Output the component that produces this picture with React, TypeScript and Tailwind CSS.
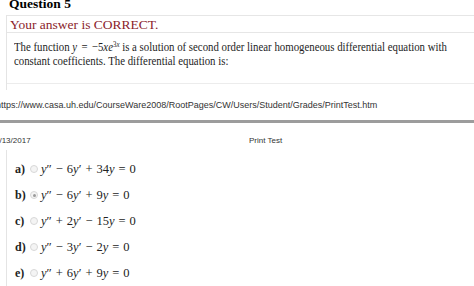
import React from 'react';

const serif = { fontFamily: '"Liberation Serif", "Times New Roman", serif' };
const sans = { fontFamily: '"Liberation Sans", Arial, sans-serif' };

function Y() {
  return <i>y</i>;
}

function Op({ c }: { c: string }) {
  return <span className="mx-[4px]">{c}</span>;
}

const options = [
  { label: 'a)', eq: <><Y />″<Op c="−" />6<Y />′<Op c="+" />34<Y /><Op c="=" />0</>, checked: false },
  { label: 'b)', eq: <><Y />″<Op c="−" />6<Y />′<Op c="+" />9<Y /><Op c="=" />0</>, checked: true },
  { label: 'c)', eq: <><Y />″<Op c="+" />2<Y />′<Op c="−" />15<Y /><Op c="=" />0</>, checked: false },
  { label: 'd)', eq: <><Y />″<Op c="−" />3<Y />′<Op c="−" />2<Y /><Op c="=" />0</>, checked: false },
  { label: 'e)', eq: <><Y />″<Op c="+" />6<Y />′<Op c="+" />9<Y /><Op c="=" />0</>, checked: false },
];

function Radio({ checked }: { checked: boolean }) {
  return (
    <span className="flex h-[8px] w-[8px] items-center justify-center rounded-full border border-[#d8d8d8] bg-[#f4f4f4]">
      {checked && <span className="h-[3px] w-[3px] rounded-full bg-[#9a9a9a]" />}
    </span>
  );
}

export default function App() {
  return (
    <div className="relative h-[286px] w-[474px] overflow-hidden bg-white text-[#222]" style={serif}>
      {/* question header, cut at the top */}
      <div className="h-[15px] overflow-hidden pl-[9px]">
        <div className="mt-[-3px] text-[13.5px] font-bold leading-[14px] text-black">Question 5</div>
      </div>

      <div className="ml-[6px] h-[75px] border-l border-[#e4e4e4]">
        <div className="h-[18px] border-y border-[#e6e6e6] pl-[3px] pt-[1px] text-[13.5px] leading-[15px] text-[#8b1d2c]">
          Your answer is CORRECT.
        </div>
        <div className="h-[51px] border-b border-[#ececec] pl-[7px] pt-[7px] text-[12.5px] leading-[14px] text-[#1e1e1e]">
          <div className="origin-left scale-x-[0.865] whitespace-nowrap">
            <div>
              The function <i>y</i>
              <span className="mx-[5px]">=</span>−5<i>xe</i>
              <sup className="text-[8px]"><span>3</span><i>x</i></sup> is a solution of second order linear homogeneous differential equation with
            </div>
            <div>constant coefficients. The differential equation is:</div>
          </div>
        </div>
      </div>

      {/* print page chrome */}
      <div className="h-[30px] pt-[10px] text-[9px] leading-[10px] text-[#333]" style={sans}>
        <div className="ml-[-4px] whitespace-nowrap">https://www.casa.uh.edu/CourseWare2008/RootPages/CW/Users/Student/Grades/PrintTest.htm</div>
      </div>
      <div className="h-[3px] bg-[#9c9c9c]" />
      <div className="h-[27px] text-[8px] leading-[10px] text-[#333]" style={sans}>
        <div className="flex pt-[13px]">
          <span className="ml-[-5px] w-[254px]">4/13/2017</span>
          <span>Print Test</span>
        </div>
      </div>

      <div className="ml-[6px] h-[140px] border-l border-[#e4e4e4] pt-[6px]">
        {options.map((o) => (
          <div key={o.label} className="flex h-[26px] items-center text-[12.5px] leading-[14px]">
            <span className="w-[23px] pl-[8px] text-[12px] font-bold">{o.label}</span>
            <Radio checked={o.checked} />
            <span className="ml-[3px] whitespace-nowrap">{o.eq}</span>
          </div>
        ))}
      </div>
    </div>
  );
}
